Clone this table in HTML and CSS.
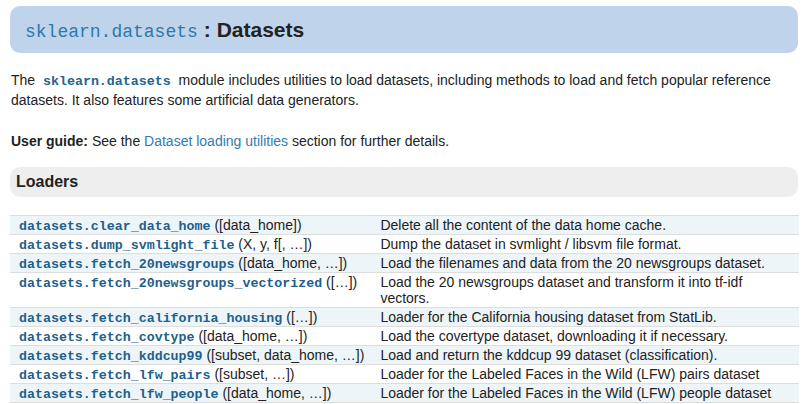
FILE: index.html
```html
<!DOCTYPE html>
<html>
<head>
<meta charset="utf-8">
<link rel="stylesheet" href="styles.css">
</head>
<body>
<div class="page">
  <h1 class="title"><span class="title-code">sklearn.datasets</span>: Datasets</h1>
  <p class="intro">The <code class="inline">sklearn.datasets</code> module includes utilities to load datasets, including methods to load and fetch popular reference datasets. It also features some artificial data generators.</p>
  <p class="guide"><strong>User guide:</strong> See the <a class="link">Dataset loading utilities</a> section for further details.</p>
  <h2 class="section">Loaders</h2>
  <table class="api">
    <tr class="odd"><td class="name"><code>datasets.clear_data_home</code> ([data_home])</td><td class="desc">Delete all the content of the data home cache.</td></tr>
    <tr class="even"><td class="name"><code>datasets.dump_svmlight_file</code> (X, y, f[, …])</td><td class="desc">Dump the dataset in svmlight / libsvm file format.</td></tr>
    <tr class="odd"><td class="name"><code>datasets.fetch_20newsgroups</code> ([data_home, …])</td><td class="desc">Load the filenames and data from the 20 newsgroups dataset.</td></tr>
    <tr class="even"><td class="name"><code>datasets.fetch_20newsgroups_vectorized</code> ([…])</td><td class="desc">Load the 20 newsgroups dataset and transform it into tf-idf vectors.</td></tr>
    <tr class="odd"><td class="name"><code>datasets.fetch_california_housing</code> ([…])</td><td class="desc">Loader for the California housing dataset from StatLib.</td></tr>
    <tr class="even"><td class="name"><code>datasets.fetch_covtype</code> ([data_home, …])</td><td class="desc">Load the covertype dataset, downloading it if necessary.</td></tr>
    <tr class="odd"><td class="name"><code>datasets.fetch_kddcup99</code> ([subset, data_home, …])</td><td class="desc">Load and return the kddcup 99 dataset (classification).</td></tr>
    <tr class="even"><td class="name"><code>datasets.fetch_lfw_pairs</code> ([subset, …])</td><td class="desc">Loader for the Labeled Faces in the Wild (LFW) pairs dataset</td></tr>
    <tr class="odd"><td class="name"><code>datasets.fetch_lfw_people</code> ([data_home, …])</td><td class="desc">Loader for the Labeled Faces in the Wild (LFW) people dataset</td></tr>
  </table>
</div>
</body>
</html>
```
FILE: styles.css
```css
html, body {
  margin: 0;
  padding: 0;
  background: #ffffff;
}
.page {
  padding: 6px 14px 0 10px;
  font-family: "Liberation Sans", Arial, sans-serif;
  font-size: 14px;
  color: #222222;
}
.title {
  margin: 0;
  background: #bfd4ea;
  border-radius: 10px;
  height: 47px;
  box-sizing: border-box;
  padding: 12px 15px 0 15px;
  font-size: 21px;
  font-weight: bold;
  line-height: 24px;
  color: #222222;
}
.title-code {
  font-family: "Liberation Mono", "Courier New", monospace;
  font-weight: normal;
  font-size: 18px;
  color: #2e78aa;
  margin-right: 6px;
}
.intro {
  margin: 17px 0 0 1px;
  padding-right: 10px;
  line-height: 20px;
}
.inline {
  font-family: "Liberation Mono", "Courier New", monospace;
  font-weight: bold;
  font-size: 13.3px;
  line-height: 0;
  color: #23648f;
  margin: 0 4px;
}
.guide {
  margin: 21px 0 0 1px;
  line-height: 20px;
}
.link {
  color: #2f7cb5;
}
.section {
  margin: 16px 0 0 0;
  background: #eeeeee;
  border-radius: 10px;
  height: 30px;
  box-sizing: border-box;
  padding: 6px 6px 0 6px;
  font-size: 16px;
  line-height: 18px;
  font-weight: bold;
  color: #222222;
}
.api {
  margin-top: 18px;
  width: 789px;
  border-collapse: collapse;
  border-top: 1px solid #dddddd;
  line-height: 16px;
}
.api td {
  padding: 1px 9px 1px 9px;
  border-bottom: 1px solid #dddddd;
  vertical-align: top;
}
.api td.name {
  width: 342px;
  white-space: nowrap;
}
.api td.desc {
  padding-left: 7px;
  padding-right: 10px;
}
.api code {
  font-family: "Liberation Mono", "Courier New", monospace;
  font-weight: bold;
  font-size: 13.3px;
  line-height: 0;
  color: #1f5f8b;
}
.odd {
  background: #edf5f9;
}
.even {
  background: #ffffff;
}
```
